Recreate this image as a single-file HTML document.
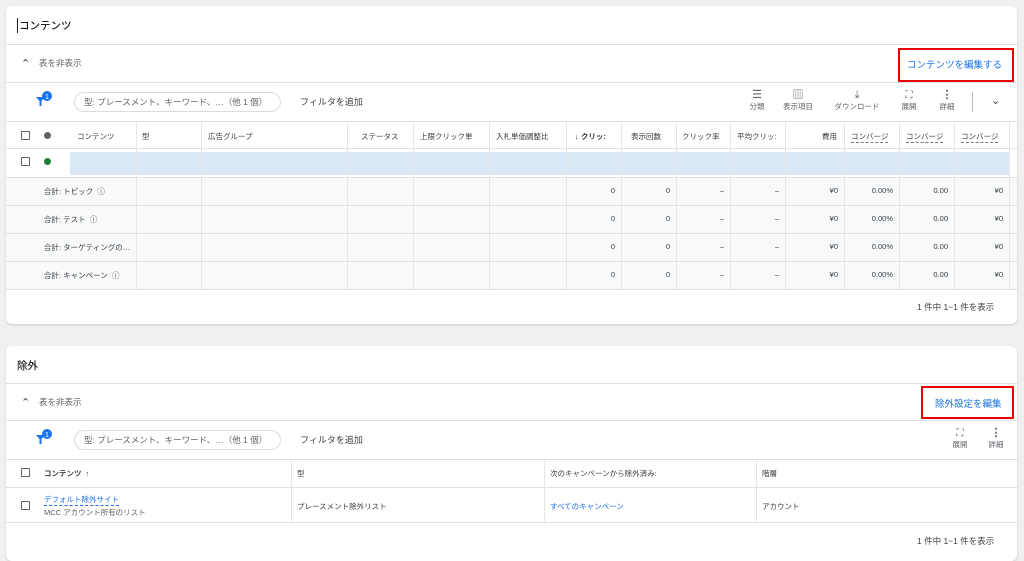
<!DOCTYPE html>
<html><head><meta charset="utf-8"><style>
*{box-sizing:border-box;margin:0;padding:0}
body{width:1024px;height:555px;background:#eef0f2;font-family:"Liberation Sans","Noto Sans CJK JP",sans-serif;color:#3c4043;position:relative;overflow:hidden;font-size:8px}
.card{position:absolute;left:6px;width:1011px;background:#fff;border-radius:6px;box-shadow:0 1px 2px rgba(0,0,0,.15)}
.a{position:absolute;white-space:nowrap}
.hl{position:absolute;left:0;right:0;height:1px;background:#e0e0e0}
.vl{position:absolute;width:1px;background:#e6e6e6}
.cb{position:absolute;width:9px;height:9px;border:1.3px solid #5f6368;border-radius:1px}
.chip{position:absolute;height:20px;border:1px solid #dadce0;border-radius:10px;font-size:8.5px;color:#5f6368;padding:3px 9px;white-space:nowrap}
.red{position:absolute;border:2.5px solid #e00;}
.link{color:#1a73e8}
.ic{position:absolute;text-align:center;font-size:7.5px;color:#5f6368}
.num{position:absolute;font-size:7.5px;color:#3c4043;text-align:right}
</style></head><body>

<div class="card" style="top:6px;height:318px">
 <div class="a" style="left:11px;top:12px;font-size:10.5px;color:#202124;font-weight:500;border-left:1px solid #202124;padding-left:1px">コンテンツ</div>
 <div class="hl" style="top:38px"></div>
 <div class="a" style="left:15px;top:51px;font-size:11px;color:#3c4043">&#8963;</div>
 <div class="a" style="left:33px;top:51px;font-size:8.5px;color:#5f6368">表を非表示</div>
 <div class="a link" style="left:901px;top:51px;font-size:9.5px">コンテンツを編集する</div>
 <div class="hl" style="top:76px"></div>
 <svg class="a" style="left:28px;top:84px" width="20" height="18" viewBox="0 0 20 18"><path d="M2 7h9l-3.5 4v5h-2v-5z" fill="#1a73e8"/><circle cx="13" cy="6" r="5" fill="#1a73e8"/><text x="13" y="9" font-size="7" fill="#fff" text-anchor="middle" font-family="Liberation Sans">1</text></svg>
 <div class="chip" style="left:68px;top:86px;width:207px">型: プレースメント、キーワード、…（他 1 個）</div>
 <div class="a" style="left:294px;top:89px;font-size:9px;color:#3c4043">フィルタを追加</div>
 <div class="ic" style="left:737px;top:84px;width:28px"><div style="font-size:11px;line-height:11px">☰</div>分類</div>
 <div class="ic" style="left:772px;top:84px;width:40px"><div style="font-size:11px;line-height:11px">▥</div>表示項目</div>
 <div class="ic" style="left:822px;top:84px;width:58px"><div style="font-size:11px;line-height:11px">⤓</div>ダウンロード</div>
 <div class="ic" style="left:890px;top:84px;width:26px"><div style="font-size:10px;line-height:11px">⛶</div>展開</div>
 <div class="ic" style="left:928px;top:84px;width:26px"><div style="font-size:11px;line-height:11px;font-weight:bold">⋮</div>詳細</div>
 <div class="vl" style="left:966px;top:86px;height:20px;background:#bbb"></div>
 <div class="a" style="left:985px;top:88px;font-size:11px;color:#3c4043">⌄</div>
 <div class="hl" style="top:115px"></div>
 <div class="cb" style="left:15px;top:125px"></div>
 <div class="a" style="left:38px;top:126px;width:7px;height:7px;border-radius:50%;background:#5f6368"></div>
 <div class="a" style="top:125px;left:71px;font-size:7.5px">コンテンツ</div>
 <div class="a" style="top:125px;left:136px;font-size:7.5px">型</div>
 <div class="a" style="top:125px;left:202px;font-size:7.5px">広告グループ</div>
 <div class="a" style="top:125px;left:355px;font-size:7.5px">ステータス</div>
 <div class="a" style="top:125px;left:414px;font-size:7.5px">上限クリック単</div>
 <div class="a" style="top:125px;left:490px;font-size:7.5px">入札単価調整比</div>
 <div class="a" style="top:125px;left:569px;font-size:7.5px;font-weight:bold">↓ クリッ:</div>
 <div class="a" style="top:125px;left:625px;font-size:7.5px">表示回数</div>
 <div class="a" style="top:125px;left:676px;font-size:7.5px">クリック率</div>
 <div class="a" style="top:125px;left:731px;font-size:7.5px">平均クリッ:</div>
 <div class="a" style="top:125px;left:816px;font-size:7.5px">費用</div>
 <div class="a" style="top:125px;left:845px;font-size:7.5px;border-bottom:1px dashed #777">コンバージ</div>
 <div class="a" style="top:125px;left:900px;font-size:7.5px;border-bottom:1px dashed #777">コンバージ</div>
 <div class="a" style="top:125px;left:955px;font-size:7.5px;border-bottom:1px dashed #777">コンバージ</div>
 <div class="hl" style="top:142px"></div>
 <div class="cb" style="left:15px;top:151px"></div>
 <div class="a" style="left:38px;top:152px;width:7px;height:7px;border-radius:50%;background:#188038"></div>
 <div class="a" style="left:64px;top:146px;width:939px;height:23px;background:#dbe8f5"></div>
 <div class="a" style="left:0;top:171px;width:1011px;height:112px;background:#f8f9fa"></div>
 <div class="hl" style="top:171px"></div><div class="hl" style="top:199px"></div><div class="hl" style="top:227px"></div><div class="hl" style="top:255px"></div><div class="hl" style="top:283px"></div>
 <div class="vl" style="left:130px;top:115px;height:168px"></div>
 <div class="vl" style="left:195px;top:115px;height:168px"></div>
 <div class="vl" style="left:341px;top:115px;height:168px"></div>
 <div class="vl" style="left:407px;top:115px;height:168px"></div>
 <div class="vl" style="left:483px;top:115px;height:168px"></div>
 <div class="vl" style="left:560px;top:115px;height:168px"></div>
 <div class="vl" style="left:615px;top:115px;height:168px"></div>
 <div class="vl" style="left:670px;top:115px;height:168px"></div>
 <div class="vl" style="left:724px;top:115px;height:168px"></div>
 <div class="vl" style="left:779px;top:115px;height:168px"></div>
 <div class="vl" style="left:838px;top:115px;height:168px"></div>
 <div class="vl" style="left:893px;top:115px;height:168px"></div>
 <div class="vl" style="left:948px;top:115px;height:168px"></div>
 <div class="vl" style="left:1003px;top:115px;height:168px"></div>
 <div class="a" style="left:38px;top:180px;font-size:7.5px">合計: トピック&nbsp; ⓘ</div>
 <div class="a" style="left:38px;top:208px;font-size:7.5px">合計: テスト&nbsp; ⓘ</div>
 <div class="a" style="left:38px;top:236px;font-size:7.5px">合計: ターゲティングの…</div>
 <div class="a" style="left:38px;top:264px;font-size:7.5px">合計: キャンペーン&nbsp; ⓘ</div>
 <div class="a" style="left:911px;top:295px;font-size:8.5px">1 件中 1~1 件を表示</div>
</div>
<div class="red" style="left:898px;top:48px;width:116px;height:34px"></div>

<div class="card" style="top:346px;height:215px">
 <div class="a" style="left:11px;top:12px;font-size:10.5px;color:#202124;font-weight:500">除外</div>
 <div class="hl" style="top:37px"></div>
 <div class="a" style="left:15px;top:50px;font-size:11px">&#8963;</div>
 <div class="a" style="left:33px;top:50px;font-size:8.5px;color:#5f6368">表を非表示</div>
 <div class="a link" style="left:929px;top:50px;font-size:9.5px">除外設定を編集</div>
 <div class="hl" style="top:74px"></div>
 <svg class="a" style="left:28px;top:82px" width="20" height="18" viewBox="0 0 20 18"><path d="M2 7h9l-3.5 4v5h-2v-5z" fill="#1a73e8"/><circle cx="13" cy="6" r="5" fill="#1a73e8"/><text x="13" y="9" font-size="7" fill="#fff" text-anchor="middle" font-family="Liberation Sans">1</text></svg>
 <div class="chip" style="left:68px;top:84px;width:207px">型: プレースメント、キーワード、…（他 1 個）</div>
 <div class="a" style="left:294px;top:87px;font-size:9px">フィルタを追加</div>
 <div class="ic" style="left:941px;top:82px;width:26px"><div style="font-size:10px;line-height:11px">⛶</div>展開</div>
 <div class="ic" style="left:977px;top:82px;width:26px"><div style="font-size:11px;line-height:11px;font-weight:bold">⋮</div>詳細</div>
 <div class="hl" style="top:113px"></div>
 <div class="cb" style="left:15px;top:122px"></div>
 <div class="a" style="left:38px;top:122px;font-size:7.5px;font-weight:bold">コンテンツ&nbsp; ↑</div>
 <div class="a" style="left:291px;top:122px;font-size:7.5px">型</div>
 <div class="a" style="left:544px;top:122px;font-size:7.5px">次のキャンペーンから除外済み:</div>
 <div class="a" style="left:756px;top:122px;font-size:7.5px">階層</div>
 <div class="hl" style="top:141px"></div>
 <div class="vl" style="left:285px;top:113px;height:63px"></div>
 <div class="vl" style="left:538px;top:113px;height:63px"></div>
 <div class="vl" style="left:750px;top:113px;height:63px"></div>
 <div class="cb" style="left:15px;top:155px"></div>
 <div class="a link" style="left:38px;top:148px;font-size:7.5px;border-bottom:1px dashed #1a73e8">デフォルト除外サイト</div>
 <div class="a" style="left:38px;top:161px;font-size:7.5px;color:#5f6368">MCC アカウント所有のリスト</div>
 <div class="a" style="left:291px;top:155px;font-size:7.5px">プレースメント除外リスト</div>
 <div class="a link" style="left:544px;top:155px;font-size:7.5px">すべてのキャンペーン</div>
 <div class="a" style="left:756px;top:155px;font-size:7.5px">アカウント</div>
 <div class="hl" style="top:176px"></div>
 <div class="a" style="left:911px;top:189px;font-size:8.5px">1 件中 1~1 件を表示</div>
</div>
<div class="red" style="left:921px;top:386px;width:93px;height:33px"></div>

<div style="position:absolute;left:6px;top:6px">
 <div class="num" style="left:560px;width:49px;top:180px">0</div><div class="num" style="left:615px;width:49px;top:180px">0</div><div class="num" style="left:670px;width:48px;top:180px">–</div><div class="num" style="left:724px;width:49px;top:180px">–</div><div class="num" style="left:779px;width:53px;top:180px">¥0</div><div class="num" style="left:838px;width:49px;top:180px">0.00%</div><div class="num" style="left:893px;width:49px;top:180px">0.00</div><div class="num" style="left:948px;width:49px;top:180px">¥0</div>
 <div class="num" style="left:560px;width:49px;top:208px">0</div><div class="num" style="left:615px;width:49px;top:208px">0</div><div class="num" style="left:670px;width:48px;top:208px">–</div><div class="num" style="left:724px;width:49px;top:208px">–</div><div class="num" style="left:779px;width:53px;top:208px">¥0</div><div class="num" style="left:838px;width:49px;top:208px">0.00%</div><div class="num" style="left:893px;width:49px;top:208px">0.00</div><div class="num" style="left:948px;width:49px;top:208px">¥0</div>
 <div class="num" style="left:560px;width:49px;top:236px">0</div><div class="num" style="left:615px;width:49px;top:236px">0</div><div class="num" style="left:670px;width:48px;top:236px">–</div><div class="num" style="left:724px;width:49px;top:236px">–</div><div class="num" style="left:779px;width:53px;top:236px">¥0</div><div class="num" style="left:838px;width:49px;top:236px">0.00%</div><div class="num" style="left:893px;width:49px;top:236px">0.00</div><div class="num" style="left:948px;width:49px;top:236px">¥0</div>
 <div class="num" style="left:560px;width:49px;top:264px">0</div><div class="num" style="left:615px;width:49px;top:264px">0</div><div class="num" style="left:670px;width:48px;top:264px">–</div><div class="num" style="left:724px;width:49px;top:264px">–</div><div class="num" style="left:779px;width:53px;top:264px">¥0</div><div class="num" style="left:838px;width:49px;top:264px">0.00%</div><div class="num" style="left:893px;width:49px;top:264px">0.00</div><div class="num" style="left:948px;width:49px;top:264px">¥0</div>
</div>
</body></html>
